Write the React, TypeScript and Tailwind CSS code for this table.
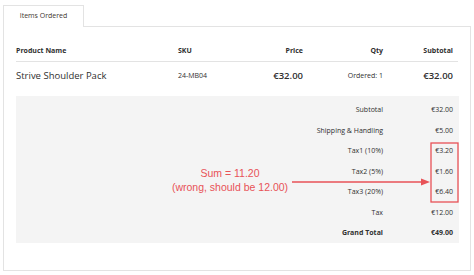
import React from "react";

const totals: { label: string; value: string; bold?: boolean }[] = [
  { label: "Subtotal", value: "€32.00" },
  { label: "Shipping & Handling", value: "€5.00" },
  { label: "Tax1 (10%)", value: "€3.20" },
  { label: "Tax2 (5%)", value: "€1.60" },
  { label: "Tax3 (20%)", value: "€6.40" },
  { label: "Tax", value: "€12.00" },
  { label: "Grand Total", value: "€49.00", bold: true },
];

export default function App() {
  return (
    <div
      className="relative w-[474px] h-[275px] bg-white px-[3px] pt-[5px] text-[#303030]"
      style={{ fontFamily: '"Open Sans", "Noto Sans", sans-serif' }}
    >
      {/* tab */}
      <div className="relative z-10 -mb-px flex h-[22px] w-[81px] items-center justify-center border border-b-0 border-[#e3e3e3] bg-white text-[7px] text-[#41362f]">
        Items Ordered
      </div>

      {/* panel */}
      <div className="h-[245px] w-[468px] border border-[#e3e3e3] px-[12px] pt-[15px]">
        {/* header row */}
        <div className="flex h-[20px] items-end border-b border-[#e3e3e3] pb-[5px] text-[7px] leading-[10px] font-bold">
          <div className="w-[162px]">Product Name</div>
          <div className="w-[75px]">SKU</div>
          <div className="w-[50px] text-right">Price</div>
          <div className="w-[80px] text-right">Qty</div>
          <div className="w-[70px] text-right">Subtotal</div>
        </div>

        {/* item row */}
        <div className="flex h-[28px] items-center pt-[1px]">
          <div className="w-[162px] text-[9.5px]">Strive Shoulder Pack</div>
          <div className="w-[75px] text-[7px]">24-MB04</div>
          <div className="w-[50px] text-right text-[9.5px] font-semibold">€32.00</div>
          <div className="w-[80px] text-right text-[7px]">Ordered: 1</div>
          <div className="w-[70px] text-right text-[9.5px] font-semibold">€32.00</div>
        </div>

        {/* totals */}
        <div className="mt-[6px] h-[147px] w-[443px] bg-[#f4f4f4] pt-[4px] text-[7px]">
          {totals.map((t) => (
            <div
              key={t.label}
              className={`flex h-[20.5px] items-center ${t.bold ? "font-bold" : ""}`}
            >
              <div className="w-[367px] text-right">{t.label}</div>
              <div className="w-[70px] text-right">{t.value}</div>
            </div>
          ))}
        </div>
      </div>

      {/* annotation */}
      <div
        className="absolute left-[150px] top-[166px] w-[160px] text-center text-[10.5px] leading-[14px] text-[#e85257]"
        style={{ fontFamily: '"Liberation Sans", Arial, sans-serif' }}
      >
        <div>Sum = 11.20</div>
        <div>(wrong, should be 12.00)</div>
      </div>
      <svg className="absolute left-[290px] top-[177px]" width="142" height="10" viewBox="0 0 142 10">
        <line x1="2" y1="5" x2="132" y2="5" stroke="#e85257" strokeWidth="1.5" />
        <polygon points="131,1.5 140,5 131,8.5" fill="#e85257" />
      </svg>
      <svg className="absolute left-[430px] top-[142px]" width="30" height="61" viewBox="0 0 30 61">
        <rect x="1" y="1" width="27" height="59" fill="none" stroke="#e85257" strokeWidth="1.3" />
      </svg>
    </div>
  );
}
